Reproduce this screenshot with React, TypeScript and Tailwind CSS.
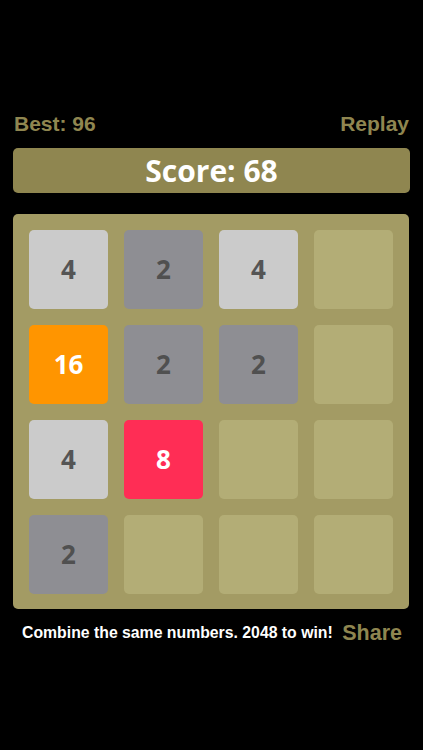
const board: (number | null)[][] = [
  [4, 2, 4, null],
  [16, 2, 2, null],
  [4, 8, null, null],
  [2, null, null, null],
]

const tileStyle: Record<number, string> = {
  2: 'bg-[#8e8e93] text-[#505050]',
  4: 'bg-[#cbcbcb] text-[#555555]',
  8: 'bg-[#ff2d55] text-white',
  16: 'bg-[#ff9500] text-white',
}

function Tile({ value }: { value: number | null }) {
  if (value === null) {
    return <div className="h-[79px] w-[79px] rounded-[5px] bg-[#b3ad76]" />
  }
  return (
    <div
      className={`flex h-[79px] w-[79px] items-center justify-center rounded-[5px] text-[26px] font-bold ${tileStyle[value]}`}
      style={{ fontFamily: '"Open Sans", Lato, sans-serif' }}
    >
      {value}
    </div>
  )
}

export default function App() {
  return (
    <div className="flex h-[750px] w-[423px] flex-col bg-black px-[13px] pt-[111px]">
      <div
        className="flex h-[26px] items-center justify-between px-px text-[21px] font-bold text-[#8f8650]"
        style={{ fontFamily: '"Liberation Sans", Arial, sans-serif' }}
      >
        <span>Best: 96</span>
        <button type="button">Replay</button>
      </div>

      <div
        className="mt-[11px] flex h-[45px] items-center justify-center rounded-[5px] bg-[#8f8650] text-[30px] font-bold text-white"
        style={{ fontFamily: '"Open Sans", Lato, sans-serif' }}
      >
        Score: 68
      </div>

      <div className="mt-[21px] grid h-[395px] w-[396px] grid-cols-4 gap-x-[16px] gap-y-[16px] rounded-[5px] bg-[#a39b64] p-[16px]">
        {board.flat().map((v, i) => (
          <Tile key={i} value={v} />
        ))}
      </div>

      <div
        className="mt-[8px] flex items-center justify-between pl-[9px] pr-[8px] font-bold"
        style={{ fontFamily: '"Liberation Sans", Arial, sans-serif' }}
      >
        <span className="text-[15.8px] text-white">Combine the same numbers. 2048 to win!</span>
        <button type="button" className="text-[21.5px] text-[#8f8650]">
          Share
        </button>
      </div>
    </div>
  )
}
